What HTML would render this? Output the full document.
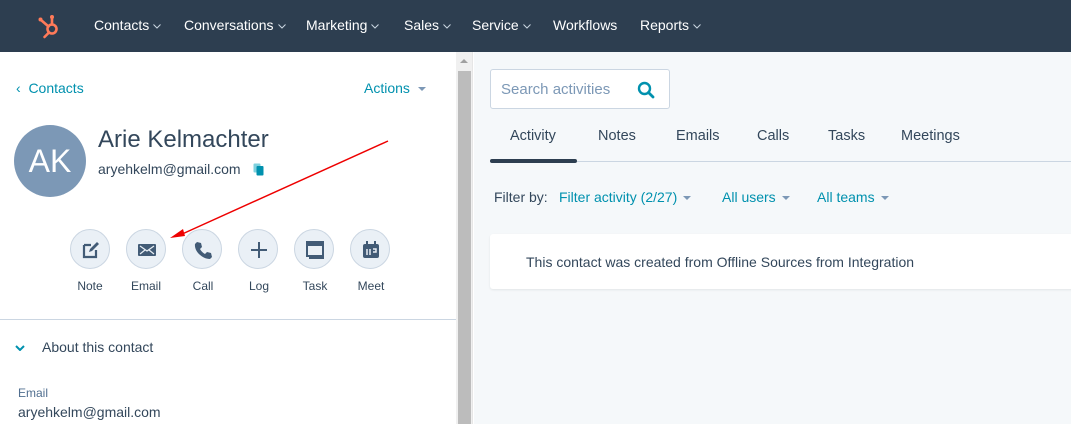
<!DOCTYPE html>
<html><head><meta charset="utf-8">
<style>
*{box-sizing:border-box;margin:0;padding:0}
body{width:1071px;height:424px;overflow:hidden;font-family:"Liberation Sans",sans-serif;background:#fff;position:relative}
.nav{position:absolute;left:0;top:0;width:1071px;height:52px;background:#2d3e50}
.nav span{position:absolute;top:17px;color:#fff;font-size:14px}
.nav svg.c{margin-left:4px;vertical-align:middle}
.left{position:absolute;left:0;top:52px;width:456px;height:372px;background:#fff}
.sb{position:absolute;left:456px;top:52px;width:17px;height:372px;background:#f0f0f0;border-right:1px solid #e6e6e6}
.thumb{position:absolute;left:458px;top:71px;width:13px;height:353px;background:#bcbcbc}
.right{position:absolute;left:474px;top:52px;width:597px;height:372px;background:#f5f8fa}
.teal{color:#0091ae}
.abs{position:absolute}
.btn{position:absolute;top:229px;width:40px;height:40px;border-radius:50%;background:#eaf0f6;border:1px solid #cbd6e2}
.btn svg{position:absolute;left:9px;top:9px}
.lbl{position:absolute;top:279px;font-size:12px;color:#33475b;width:60px;text-align:center}
.tab{position:absolute;top:128px;font-size:14.5px;color:#33475b}
.car{display:inline-block;width:0;height:0;border-left:4px solid transparent;border-right:4px solid transparent;border-top:4px solid #7c98b6;vertical-align:middle;margin-left:4px}
</style></head><body>
<div class="nav">
<svg class="abs" style="left:36px;top:12px" width="28" height="28" viewBox="0 0 28 28"><g stroke="#ff7a59" stroke-width="2.6" fill="none" stroke-linecap="round"><circle cx="16" cy="17" r="4.5"/><line x1="16" y1="12.5" x2="16" y2="6"/><line x1="12.5" y1="14.5" x2="5" y2="8"/><line x1="13" y1="20.5" x2="8.5" y2="25"/></g><circle cx="16" cy="5" r="2" fill="#ff7a59"/><circle cx="4.5" cy="7.5" r="2" fill="#ff7a59"/></svg>
<span style="left:94px">Contacts<svg class="c" width="8" height="5" viewBox="0 0 8 5"><path d="M.5.5L4 4 7.5.5" stroke="#cbd6e2" fill="none"/></svg></span>
<span style="left:184px">Conversations<svg class="c" width="8" height="5" viewBox="0 0 8 5"><path d="M.5.5L4 4 7.5.5" stroke="#cbd6e2" fill="none"/></svg></span>
<span style="left:306px">Marketing<svg class="c" width="8" height="5" viewBox="0 0 8 5"><path d="M.5.5L4 4 7.5.5" stroke="#cbd6e2" fill="none"/></svg></span>
<span style="left:404px">Sales<svg class="c" width="8" height="5" viewBox="0 0 8 5"><path d="M.5.5L4 4 7.5.5" stroke="#cbd6e2" fill="none"/></svg></span>
<span style="left:472px">Service<svg class="c" width="8" height="5" viewBox="0 0 8 5"><path d="M.5.5L4 4 7.5.5" stroke="#cbd6e2" fill="none"/></svg></span>
<span style="left:553px">Workflows</span>
<span style="left:640px">Reports<svg class="c" width="8" height="5" viewBox="0 0 8 5"><path d="M.5.5L4 4 7.5.5" stroke="#cbd6e2" fill="none"/></svg></span>
</div>
<div class="left"></div>
<div class="abs teal" style="left:16px;top:80px;font-size:14px">‹&nbsp; Contacts</div>
<div class="abs teal" style="left:364px;top:80px;font-size:14px">Actions<span class="car" style="margin-left:8px"></span></div>
<div class="abs" style="left:14px;top:125px;width:72px;height:72px;border-radius:50%;background:#7c98b6;color:#fff;font-size:32px;text-align:center;line-height:72px">AK</div>
<div class="abs" style="left:98px;top:126px;font-size:24px;color:#33475b">Arie Kelmachter</div>
<div class="abs" style="left:98px;top:161px;font-size:14px;color:#33475b">aryehkelm@gmail.com</div>
<svg class="abs" style="left:253px;top:163px" width="12" height="13" viewBox="0 0 12 13"><rect x="0.5" y="0.5" width="7" height="9" rx="1" fill="#7fd1de"/><rect x="3.5" y="3" width="7" height="9.5" rx="1" fill="#0091ae"/></svg>

<div class="btn" style="left:70px"><svg width="22" height="22" viewBox="0 0 22 22"><path d="M4 6h7M4 6v12h12v-7" stroke="#425b76" stroke-width="2.2" fill="none"/><path d="M9 13l1-3 7-7 2 2-7 7z" fill="#425b76"/></svg></div>
<div class="btn" style="left:126px"><svg width="22" height="22" viewBox="0 0 22 22"><rect x="2" y="5" width="18" height="12" rx="1" fill="#425b76"/><path d="M4 7l7 5 7-5M4 15l5-4M18 15l-5-4" stroke="#eaf0f6" stroke-width="1.2" fill="none"/></svg></div>
<div class="btn" style="left:182px"><svg width="22" height="22" viewBox="0 0 22 22"><path d="M5 3l4 1 1 4-2 2c1 2 3 4 5 5l2-2 4 1 1 4-2 2C10 20 2 12 3 5z" fill="#425b76"/></svg></div>
<div class="btn" style="left:238px"><svg width="22" height="22" viewBox="0 0 22 22"><path d="M11 3v16M3 11h16" stroke="#425b76" stroke-width="2"/></svg></div>
<div class="btn" style="left:294px"><svg width="22" height="22" viewBox="0 0 22 22"><path d="M3 3h16v14H3z" stroke="#425b76" stroke-width="2" fill="none"/><rect x="3" y="3" width="16" height="4" fill="#425b76"/><path d="M5 19h15" stroke="#425b76" stroke-width="2"/></svg></div>
<div class="btn" style="left:350px"><svg width="22" height="22" viewBox="0 0 22 22"><rect x="3" y="5" width="16" height="14" rx="2" fill="#425b76"/><rect x="6" y="2" width="2" height="5" fill="#425b76"/><rect x="14" y="2" width="2" height="5" fill="#425b76"/><path d="M7 10v6M10 10v6M13 10h3v3h-3" stroke="#eaf0f6" stroke-width="1.5" fill="none"/></svg></div>
<div class="lbl" style="left:60px">Note</div>
<div class="lbl" style="left:116px">Email</div>
<div class="lbl" style="left:173px">Call</div>
<div class="lbl" style="left:229px">Log</div>
<div class="lbl" style="left:285px">Task</div>
<div class="lbl" style="left:341px">Meet</div>
<div class="abs" style="left:0;top:319px;width:456px;height:1px;background:#cbd6e2"></div>
<svg class="abs" style="left:15px;top:345px" width="10" height="6" viewBox="0 0 10 6"><path d="M1 1l4 4 4-4" stroke="#0091ae" stroke-width="2" fill="none"/></svg>
<div class="abs" style="left:42px;top:339px;font-size:14px;color:#33475b">About this contact</div>
<div class="abs" style="left:18px;top:386px;font-size:12px;color:#516f90">Email</div>
<div class="abs" style="left:18px;top:404px;font-size:14px;color:#33475b">aryehkelm@gmail.com</div>

<div class="sb"></div>
<div class="abs" style="left:460px;top:59px;width:0;height:0;border-left:4px solid transparent;border-right:4px solid transparent;border-bottom:4px solid #a0a0a0"></div>
<div class="thumb"></div>
<div class="right"></div>
<div class="abs" style="left:490px;top:69px;width:180px;height:40px;background:#fff;border:1px solid #cbd6e2;border-radius:3px"></div>
<div class="abs" style="left:501px;top:81px;font-size:15px;color:#7c98b6">Search activities</div>
<svg class="abs" style="left:637px;top:81px" width="18" height="18" viewBox="0 0 18 18"><circle cx="7.5" cy="7.5" r="5.5" stroke="#0091ae" stroke-width="2.4" fill="none"/><path d="M11.5 11.5l4.5 4.5" stroke="#0091ae" stroke-width="2.8" stroke-linecap="round"/></svg>
<div class="tab" style="left:510px">Activity</div>
<div class="tab" style="left:598px">Notes</div>
<div class="tab" style="left:676px">Emails</div>
<div class="tab" style="left:757px">Calls</div>
<div class="tab" style="left:828px">Tasks</div>
<div class="tab" style="left:901px">Meetings</div>
<div class="abs" style="left:490px;top:161px;width:581px;height:1px;background:#cbd6e2"></div>
<div class="abs" style="left:490px;top:159px;width:87px;height:4px;border-radius:2px;background:#2d3e50"></div>
<div class="abs" style="left:494px;top:189px;font-size:14px;color:#33475b">Filter by:</div>
<div class="abs teal" style="left:559px;top:189px;font-size:14px">Filter activity (2/27)<span class="car" style="margin-left:6px"></span></div>
<div class="abs teal" style="left:722px;top:189px;font-size:14px">All users<span class="car" style="margin-left:6px"></span></div>
<div class="abs teal" style="left:817px;top:189px;font-size:14px">All teams<span class="car" style="margin-left:6px"></span></div>
<div class="abs" style="left:490px;top:234px;width:590px;height:55px;background:#fff;border-radius:3px;box-shadow:0 1px 2px rgba(0,0,0,.08)"></div>
<div class="abs" style="left:526px;top:254px;font-size:14px;color:#33475b">This contact was created from Offline Sources from Integration</div>

<svg class="abs" style="left:0;top:0" width="1071" height="424"><line x1="388" y1="141" x2="180" y2="235" stroke="#e00" stroke-width="1.5"/><path d="M170 238l13-9 2 7z" fill="#e00"/></svg>
</body></html>
